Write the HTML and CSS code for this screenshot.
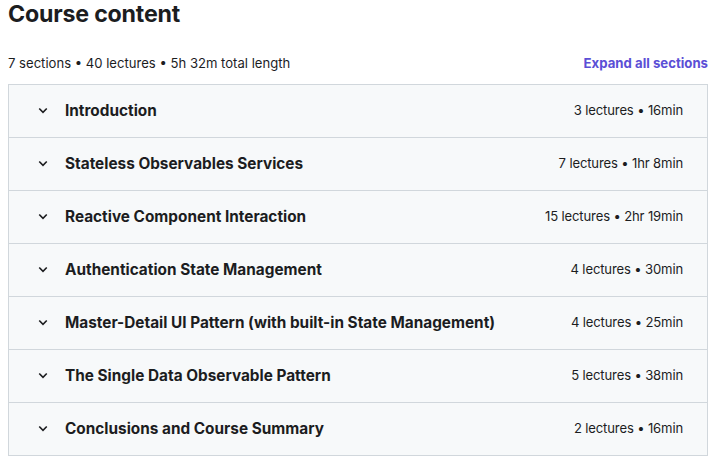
FILE: index.html
```html
<!DOCTYPE html>
<html lang="en">
<head>
<meta charset="utf-8">
<title>Course content</title>
<link rel="stylesheet" href="styles.css">
</head>
<body>
<div class="curriculum">
  <h2 class="title">Course content</h2>
  <div class="summary">
    <span>7 sections • 40 lectures • 5h 32m total length</span>
    <button class="expand">Expand all sections</button>
  </div>
  <div class="sections">
    <div class="section">
      <svg class="chev" viewBox="0 0 24 24"><path d="M7 10l5 5 5-5"/></svg>
      <span class="name">Introduction</span>
      <span class="meta">3 lectures • 16min</span>
    </div>
    <div class="section">
      <svg class="chev" viewBox="0 0 24 24"><path d="M7 10l5 5 5-5"/></svg>
      <span class="name">Stateless Observables Services</span>
      <span class="meta">7 lectures • 1hr 8min</span>
    </div>
    <div class="section">
      <svg class="chev" viewBox="0 0 24 24"><path d="M7 10l5 5 5-5"/></svg>
      <span class="name">Reactive Component Interaction</span>
      <span class="meta">15 lectures • 2hr 19min</span>
    </div>
    <div class="section">
      <svg class="chev" viewBox="0 0 24 24"><path d="M7 10l5 5 5-5"/></svg>
      <span class="name">Authentication State Management</span>
      <span class="meta">4 lectures • 30min</span>
    </div>
    <div class="section">
      <svg class="chev" viewBox="0 0 24 24"><path d="M7 10l5 5 5-5"/></svg>
      <span class="name">Master-Detail UI Pattern (with built-in State Management)</span>
      <span class="meta">4 lectures • 25min</span>
    </div>
    <div class="section">
      <svg class="chev" viewBox="0 0 24 24"><path d="M7 10l5 5 5-5"/></svg>
      <span class="name">The Single Data Observable Pattern</span>
      <span class="meta">5 lectures • 38min</span>
    </div>
    <div class="section">
      <svg class="chev" viewBox="0 0 24 24"><path d="M7 10l5 5 5-5"/></svg>
      <span class="name">Conclusions and Course Summary</span>
      <span class="meta">2 lectures • 16min</span>
    </div>
  </div>
</div>
</body>
</html>
```

FILE: styles.css
```css
html, body {
  margin: 0;
  padding: 0;
  background: #fff;
}

body {
  font-family: Inter, "Noto Sans", sans-serif;
  color: #1c1d1f;
}

.curriculum {
  padding: 0 3px 0 8px;
}

.title {
  margin: 0;
  font-size: 23.2px;
  line-height: 28px;
  font-weight: 700;
  letter-spacing: -0.2px;
  color: #1c1d1f;
}

.summary {
  display: flex;
  justify-content: space-between;
  align-items: center;
  margin-top: 25px;
  height: 20px;
  margin-bottom: 11px;
  font-size: 13.1px;
}

.expand {
  border: 0;
  background: none;
  padding: 0;
  font: inherit;
  font-weight: 700;
  font-size: 13.2px;
  color: #5b4fd6;
  cursor: pointer;
}

.sections {
  border: 1px solid #d1d7dc;
}

.section {
  display: flex;
  align-items: center;
  height: 52px;
  padding: 0 24px 2px 24px;
  box-sizing: border-box;
  height: 53px;
  background: #f7f9fa;
  border-top: 1px solid #d1d7dc;
}

.section:first-child {
  border-top: 0;
  height: 52px;
}

.chev {
  width: 18px;
  height: 18px;
  fill: none;
  stroke: #1c1d1f;
  stroke-width: 2.2;
  margin: 0 13px 0 1px;
  flex: none;
}

.name {
  flex: 1;
  font-size: 15.35px;
  font-weight: 700;
}

.meta {
  font-size: 13.1px;
  letter-spacing: -0.15px;
}
```
